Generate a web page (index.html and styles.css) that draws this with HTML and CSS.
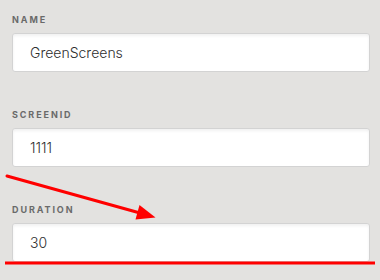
FILE: index.html
```html
<!DOCTYPE html>
<html>
<head>
<meta charset="utf-8">
<link rel="stylesheet" href="styles.css">
</head>
<body>
<div class="form">
  <div class="field">
    <label class="label">NAME</label>
    <div class="input">GreenScreens</div>
  </div>
  <div class="field">
    <label class="label">SCREENID</label>
    <div class="input">1111</div>
  </div>
  <div class="field">
    <label class="label">DURATION</label>
    <div class="input">30</div>
  </div>
</div>
<svg class="annot" width="380" height="280" viewBox="0 0 380 280">
  <line x1="7" y1="176" x2="140" y2="213" stroke="#ff0000" stroke-width="3" stroke-linecap="round"/>
  <polygon points="155.5,217.5 139.5,205 135.5,219.5" fill="#ff0000"/>
  <rect x="5" y="261.5" width="370" height="3" fill="#ff0000"/>
</svg>
</body>
</html>
```
FILE: styles.css
```css
html, body {
  margin: 0;
  padding: 0;
  background: #e3e2e0;
  width: 380px;
  height: 280px;
  overflow: hidden;
}
.form {
  padding: 14px 10px 0 12px;
  display: flex;
  flex-direction: column;
  gap: 37px;
  font-family: "Inter", "DejaVu Sans", sans-serif;
}
.field {
  display: flex;
  flex-direction: column;
  gap: 7px;
}
.label {
  font-family: "Inter", sans-serif;
  font-size: 9px;
  line-height: 12px;
  height: 12px;
  font-weight: 700;
  letter-spacing: 1.9px;
  color: #6a6a6a;
}
.input {
  box-sizing: border-box;
  height: 39px;
  width: 358px;
  background: #ffffff;
  border: 1px solid #d3d3d3;
  border-radius: 3px;
  box-shadow: inset 0 2px 3px rgba(0,0,0,0.06);
  padding: 0 17px;
  display: flex;
  align-items: center;
  font-size: 14px;
  font-weight: 300;
  color: #2e2e2e;
}
.annot {
  position: absolute;
  left: 0;
  top: 0;
}
```
